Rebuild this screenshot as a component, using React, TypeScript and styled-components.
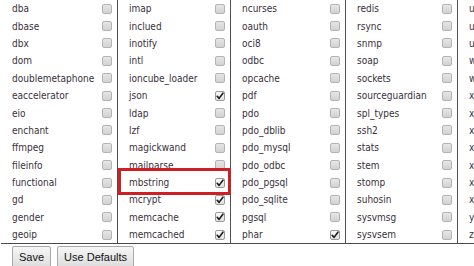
import React from 'react';
import styled, { createGlobalStyle } from 'styled-components';

const GlobalStyle = createGlobalStyle`
    html, body {
        margin: 0;
        padding: 0;
        background: #ffffff;
        overflow: hidden;
    }
`;

type Ext = { name: string; on?: boolean };

const COLUMNS: { width: number; items: Ext[] }[] = [
    {
        width: 117,
        items: [
            { name: 'dba' }, { name: 'dbase' }, { name: 'dbx' }, { name: 'dom' }, { name: 'doublemetaphone' },
            { name: 'eaccelerator' }, { name: 'eio' }, { name: 'enchant' }, { name: 'ffmpeg' }, { name: 'fileinfo' },
            { name: 'functional' }, { name: 'gd' }, { name: 'gender' }, { name: 'geoip' },
        ],
    },
    {
        width: 113,
        items: [
            { name: 'imap' }, { name: 'inclued' }, { name: 'inotify' }, { name: 'intl' }, { name: 'ioncube_loader' },
            { name: 'json', on: true }, { name: 'ldap' }, { name: 'lzf' }, { name: 'magickwand' }, { name: 'mailparse' },
            { name: 'mbstring', on: true }, { name: 'mcrypt', on: true }, { name: 'memcache', on: true }, { name: 'memcached', on: true },
        ],
    },
    {
        width: 115,
        items: [
            { name: 'ncurses' }, { name: 'oauth' }, { name: 'oci8' }, { name: 'odbc' }, { name: 'opcache' },
            { name: 'pdf' }, { name: 'pdo' }, { name: 'pdo_dblib' }, { name: 'pdo_mysql' }, { name: 'pdo_odbc' },
            { name: 'pdo_pgsql' }, { name: 'pdo_sqlite' }, { name: 'pgsql' }, { name: 'phar', on: true },
        ],
    },
    {
        width: 112,
        items: [
            { name: 'redis' }, { name: 'rsync' }, { name: 'snmp' }, { name: 'soap' }, { name: 'sockets' },
            { name: 'sourceguardian' }, { name: 'spl_types' }, { name: 'ssh2' }, { name: 'stats' }, { name: 'stem' },
            { name: 'stomp' }, { name: 'suhosin' }, { name: 'sysvmsg' }, { name: 'sysvsem' },
        ],
    },
    {
        width: 113,
        items: [
            { name: 'uploadprogress' }, { name: 'uri_template' }, { name: 'uuid' }, { name: 'wddx' }, { name: 'weakref' },
            { name: 'xcache' }, { name: 'xcache_3' }, { name: 'xdebug' }, { name: 'xhprof' }, { name: 'xmlreader' },
            { name: 'xmlrpc' }, { name: 'xmlwriter' }, { name: 'yaml' }, { name: 'zip' },
        ],
    },
];

const Page = styled.div`
    width: 474px;
    height: 266px;
    overflow: hidden;
`;

const Grid = styled.div`
    position: relative;
    display: flex;
    width: 700px;
    margin-left: 1px;
    border-bottom: 1px solid #4a4a4a;
`;

const Column = styled.div<{ $width: number }>`
    flex: 0 0 ${(p) => p.$width}px;
    box-sizing: border-box;
    display: grid;
    grid-template-rows: repeat(14, 17.4px);
    border-right: 1px solid #505050;
`;

const Row = styled.label`
    display: flex;
    align-items: center;
    justify-content: space-between;
    padding: 0 5px 0 11px;
    font-family: 'DejaVu Sans Condensed', 'DejaVu Sans', sans-serif;
    font-size: 10px;
    color: #3a2f3d;
    white-space: nowrap;
`;

const Box = styled.span<{ $on?: boolean }>`
    flex: 0 0 auto;
    box-sizing: border-box;
    width: 10px;
    height: 10px;
    border: 1px solid ${(p) => (p.$on ? '#9a9a9a' : '#b4b4b4')};
    border-radius: 2px;
    background: ${(p) => (p.$on ? 'linear-gradient(#fafafa, #e2e2e2)' : 'linear-gradient(#e6e6e6, #d2d2d2)')};
    display: flex;
    align-items: center;
    justify-content: center;
`;

const Highlight = styled.div`
    position: absolute;
    left: 117px;
    top: 168px;
    width: 113px;
    height: 27px;
    box-sizing: border-box;
    border: 3px solid #cf1f24;
    pointer-events: none;
`;

const Actions = styled.div`
    display: flex;
    gap: 6px;
    padding: 2px 0 0 12px;
`;

const Button = styled.button`
    height: 22px;
    padding: 0 6px;
    font-family: 'Liberation Sans', Arial, sans-serif;
    font-size: 11px;
    color: #111111;
    border: 1px solid #a9a9a9;
    border-radius: 2px;
    background: linear-gradient(#f6f6f6, #dddddd);
`;

const Check = () => (
    <svg width='8' height='8' viewBox='0 0 8 8'>
        <path d='M1.2 4.3 L3.1 6.4 L6.9 1.2' fill='none' stroke='#1a1a1a' strokeWidth='1.6' strokeLinecap='round' strokeLinejoin='round' />
    </svg>
);

const App = () => (
    <Page>
        <GlobalStyle />
        <Grid>
            {COLUMNS.map((col, ci) => (
                <Column key={ci} $width={col.width}>
                    {col.items.map((ext, ri) => (
                        <Row key={ri}>
                            <span>{ext.name}</span>
                            <Box $on={ext.on}>{ext.on && <Check />}</Box>
                        </Row>
                    ))}
                </Column>
            ))}
            {/* annotation around the mbstring row */}
            <Highlight />
        </Grid>
        <Actions>
            <Button>Save</Button>
            <Button>Use Defaults</Button>
        </Actions>
    </Page>
);

export default App;
